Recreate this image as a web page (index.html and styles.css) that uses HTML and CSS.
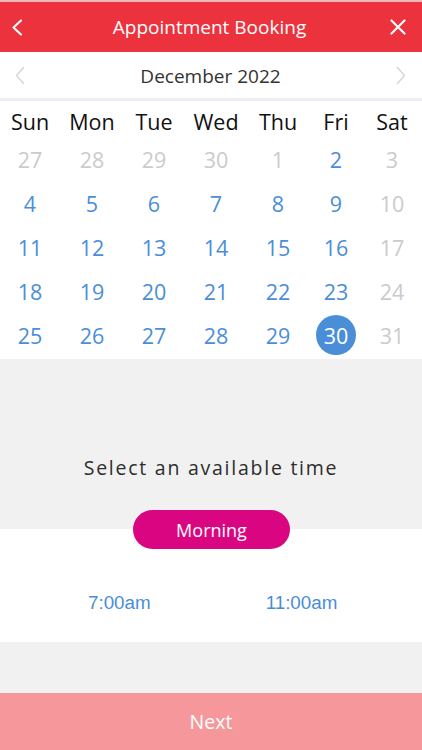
FILE: index.html
```html
<!DOCTYPE html>
<html>
<head>
<meta charset="utf-8">
<link rel="stylesheet" href="styles.css">
</head>
<body>
<div class="app">
  <div class="topline"></div>
  <header class="header">
    <svg class="hicon back" width="12" height="17" viewBox="0 0 12 17"><path d="M10 1.5 L2.5 8.5 L10 15.5" fill="none" stroke="#fff" stroke-width="2.1" stroke-linecap="round" stroke-linejoin="round"/></svg>
    <h1 class="title">Appointment Booking</h1>
    <svg class="hicon close" width="16" height="16" viewBox="0 0 16 16"><path d="M1.5 1.5 L14.5 14.5 M14.5 1.5 L1.5 14.5" fill="none" stroke="#fff" stroke-width="2.2" stroke-linecap="round"/></svg>
  </header>
  <div class="monthbar">
    <svg class="mnav" width="11" height="19" viewBox="0 0 11 19"><path d="M9 1 L1.5 9.5 L9 18" fill="none" stroke="#d5d5d5" stroke-width="1.4"/></svg>
    <span class="month">December 2022</span>
    <svg class="mnav" width="11" height="19" viewBox="0 0 11 19"><path d="M2 1 L9.5 9.5 L2 18" fill="none" stroke="#d5d5d5" stroke-width="1.4"/></svg>
  </div>
  <div class="calendar">
    <div class="wd">Sun</div><div class="wd">Mon</div><div class="wd">Tue</div><div class="wd">Wed</div><div class="wd">Thu</div><div class="wd">Fri</div><div class="wd">Sat</div>
    <div class="d off">27</div><div class="d off">28</div><div class="d off">29</div><div class="d off">30</div><div class="d off">1</div><div class="d">2</div><div class="d off">3</div>
    <div class="d">4</div><div class="d">5</div><div class="d">6</div><div class="d">7</div><div class="d">8</div><div class="d">9</div><div class="d off">10</div>
    <div class="d">11</div><div class="d">12</div><div class="d">13</div><div class="d">14</div><div class="d">15</div><div class="d">16</div><div class="d off">17</div>
    <div class="d">18</div><div class="d">19</div><div class="d">20</div><div class="d">21</div><div class="d">22</div><div class="d">23</div><div class="d off">24</div>
    <div class="d">25</div><div class="d">26</div><div class="d">27</div><div class="d">28</div><div class="d">29</div><div class="d sel"><span>30</span></div><div class="d off">31</div>
  </div>
  <div class="selectarea">
    <p class="prompt">Select an available time</p>
  </div>
  <div class="slots">
    <div class="pill">Morning</div>
    <div class="times">
      <span class="time">7:00am</span>
      <span class="time">11:00am</span>
    </div>
  </div>
  <div class="spacer"></div>
  <div class="next">Next</div>
</div>
</body>
</html>
```
FILE: styles.css
```css
* { box-sizing: border-box; margin: 0; padding: 0; }
html, body { width: 422px; height: 750px; overflow: hidden; }
body { font-family: "Open Sans", "Noto Sans", sans-serif; background: #f1f1f1; }
.app { display: flex; flex-direction: column; height: 750px; }
.topline { height: 2px; background: #f0b8bb; }
.header {
  height: 50px; background: #ec323d; display: flex; align-items: center;
  justify-content: space-between; padding: 0 16px 0 11px;
}
.title { font-weight: 400; font-size: 19px; color: #fff; margin-left: 6px; }
.hicon { display: block; }
.monthbar {
  height: 49px; background: #fff; display: flex; align-items: center;
  justify-content: space-between; padding: 1px 16px 0 15px;
  border-bottom: 3px solid #ebeef2;
}
.month { font-size: 19px; color: #333; }
.calendar {
  background: #fff; display: grid;
  grid-template-columns: 60px 64px 60px 64px 60px 56px 56px;
  grid-template-rows: 35px repeat(5, 44px);
  padding: 1px 2px 3px 0; height: 258px;
}
.wd { font-size: 21.5px; color: #111; display: flex; align-items: center; justify-content: center; padding-top: 4px; }
.d { font-size: 21.5px; color: #4a8ed8; display: flex; align-items: center; justify-content: center; }
.d.off { color: #cbcbcb; }
.d.sel span {
  width: 40px; height: 40px; border-radius: 50%; background: #4a8ed8; color: #fff;
  display: flex; align-items: center; justify-content: center; flex: none;
}
.selectarea { height: 170px; display: flex; align-items: center; justify-content: center; padding-top: 47px; }
.prompt { font-size: 19.5px; color: #2d2d2d; letter-spacing: 1.75px; }
.slots { background: #fff; height: 113px; position: relative; }
.pill {
  position: absolute; left: 133px; top: -19px; width: 157px; height: 39px;
  border-radius: 20px; background: #da0681; color: #fff; font-size: 18px;
  display: flex; align-items: center; justify-content: center;
}
.times { display: flex; padding-top: 63px; }
.time { font-family: "Liberation Sans", Arial, sans-serif; font-size: 18.8px; color: #4a8ed8; }
.time:first-child { margin-left: 88px; }
.time:last-child { margin-left: 115px; }
.spacer { height: 51px; }
.next {
  flex: 1; background: #f6989b; color: #fff; font-size: 19.5px;
  display: flex; align-items: center; justify-content: center;
}
```
